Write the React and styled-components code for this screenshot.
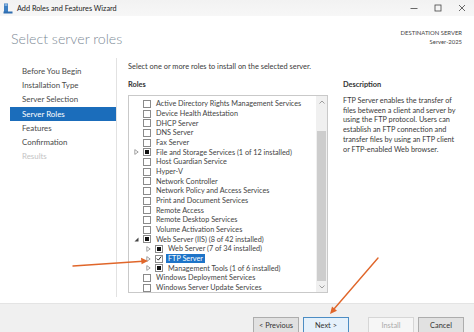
import React from 'react'
import styled, { createGlobalStyle, css } from 'styled-components'

const GlobalStyle = createGlobalStyle`
  html, body {
    margin: 0;
    padding: 0;
    background: #ffffff;
  }
  * { box-sizing: border-box; }
`

const Window = styled.div`
  position: relative;
  width: 474px;
  height: 332px;
  overflow: hidden;
  background: #ffffff;
  font-family: Lato, "Noto Sans", sans-serif;
  color: #333;
  display: flex;
  flex-direction: column;
`

const TitleBar = styled.div`
  height: 16px;
  flex: none;
  display: flex;
  align-items: center;
  padding-left: 3px;
  background: linear-gradient(#f2f2f2, #f7f7f7);
  font-size: 7.3px;
  color: #222;
`

const TitleText = styled.span`
  margin-left: 4px;
  flex: 1;
`

const Controls = styled.div`
  display: flex;
  align-items: center;
  height: 100%;
`

const CtrlBtn = styled.div`
  width: 24px;
  height: 100%;
  display: flex;
  align-items: center;
  justify-content: center;
`

const Header = styled.div`
  height: 42px;
  flex: none;
  display: flex;
  justify-content: space-between;
  padding: 8px 12px 0 11px;
`

const Heading = styled.h1`
  margin: 0;
  font-weight: 300;
  font-size: 14.2px;
  color: #7d8a96;
  line-height: 30px;
`

const Dest = styled.div`
  text-align: right;
  font-size: 5.9px;
  line-height: 9px;
  color: #444;
  padding-top: 4px;
`

const Body = styled.div`
  flex: 1;
  display: flex;
  min-height: 0;
`

const Nav = styled.div`
  width: 117px;
  flex: none;
  padding-top: 6px;
  border-right: 1px solid #e2e2e2;
  margin-bottom: 6px;
`

const NavItem = styled.div`
  height: 14.2px;
  line-height: 14.2px;
  margin-left: 10px;
  padding-left: 12px;
  font-size: 7.9px;
  color: ${p => (p.$disabled ? '#c4c4c4' : '#4a4a4a')};
  ${p =>
    p.$active &&
    css`
      background: #1b6dbb;
      color: #ffffff;
    `}
`

const Content = styled.div`
  flex: 1;
  display: flex;
  flex-direction: column;
  padding: 3px 0 0 11px;
`

const Intro = styled.div`
  font-size: 7.4px;
  line-height: 12px;
  color: #3a3a3a;
`

const Columns = styled.div`
  display: flex;
  margin-top: 6px;
`

const RolesCol = styled.div`
  width: 200px;
  flex: none;
`

const Label = styled.div`
  font-size: 7.4px;
  font-weight: 700;
  color: #333;
  line-height: 12px;
`

const ListBox = styled.div`
  margin-top: 4px;
  height: 198px;
  border: 1px solid #c9c9c9;
  display: flex;
`

const Rows = styled.div`
  flex: 1;
  padding-top: 3px;
`

const Row = styled.div`
  height: 9.68px;
  display: flex;
  align-items: center;
  padding-left: ${p => 4 + p.$level * 12}px;
  font-size: 7.25px;
  color: #444;
  white-space: nowrap;
`

const Expander = styled.div`
  width: 10px;
  flex: none;
  display: flex;
  align-items: center;
  padding-left: 1px;
`

const Check = styled.div`
  width: 8px;
  height: 8px;
  flex: none;
  border: 1px solid #8a8a8a;
  background: #fff;
  display: flex;
  align-items: center;
  justify-content: center;
`

const Partial = styled.div`
  width: 4px;
  height: 4px;
  background: #111;
`

const RowText = styled.span`
  margin-left: 4px;
  padding: 0 1px;
  line-height: 9px;
  ${p =>
    p.$selected &&
    css`
      background: #1e74c8;
      color: #fff;
      margin-left: 3px;
      padding: 0 2px;
    `}
`

const ScrollBar = styled.div`
  width: 11px;
  flex: none;
  background: #f0f0f0;
  display: flex;
  flex-direction: column;
  align-items: stretch;
`

const ScrollArrow = styled.div`
  height: 11px;
  display: flex;
  align-items: center;
  justify-content: center;
`

const ScrollTrack = styled.div`
  flex: 1;
  display: flex;
  flex-direction: column;
  padding: 24px 1px 0 1px;
`

const Thumb = styled.div`
  height: 150px;
  background: #cdcdcd;
`

const DescCol = styled.div`
  flex: 1;
  padding-left: 15px;
  padding-right: 4px;
`

const DescText = styled.div`
  margin-top: 5px;
  font-size: 7.3px;
  line-height: 9.7px;
  color: #3a3a3a;
  white-space: nowrap;
`

const Footer = styled.div`
  height: 29px;
  flex: none;
  background: #f0f0f0;
  border-top: 1px solid #e4e4e4;
  display: flex;
  align-items: flex-start;
  padding: 13px 0 0 253px;
  gap: 4px;
`

const Button = styled.div`
  width: 46px;
  height: 20px;
  flex: none;
  display: flex;
  align-items: flex-start;
  justify-content: center;
  padding-top: 3px;
  font-size: 7.4px;
  border: 1px solid #adadad;
  background: #e1e1e1;
  color: #333;
  margin-left: ${p => p.$gap || 0}px;
  ${p =>
    p.$primary &&
    css`
      border-color: #4c8dc4;
      background: #e5f1fb;
    `}
  ${p =>
    p.$disabled &&
    css`
      border-color: #d6d6d6;
      background: #f6f6f6;
      color: #aaa;
    `}
`

const Overlay = styled.svg`
  position: absolute;
  left: 0;
  top: 0;
  pointer-events: none;
`

const roles = [
  { text: 'Active Directory Rights Management Services' },
  { text: 'Device Health Attestation' },
  { text: 'DHCP Server' },
  { text: 'DNS Server' },
  { text: 'Fax Server' },
  { text: 'File and Storage Services (1 of 12 installed)', exp: 'closed', state: 'partial' },
  { text: 'Host Guardian Service' },
  { text: 'Hyper-V' },
  { text: 'Network Controller' },
  { text: 'Network Policy and Access Services' },
  { text: 'Print and Document Services' },
  { text: 'Remote Access' },
  { text: 'Remote Desktop Services' },
  { text: 'Volume Activation Services' },
  { text: 'Web Server (IIS) (8 of 42 installed)', exp: 'open', state: 'partial' },
  { text: 'Web Server (7 of 34 installed)', exp: 'closed', state: 'partial', level: 1 },
  { text: 'FTP Server', exp: 'closed', state: 'checked', level: 1, selected: true },
  { text: 'Management Tools (1 of 6 installed)', exp: 'closed', state: 'partial', level: 1 },
  { text: 'Windows Deployment Services' },
  { text: 'Windows Server Update Services' },
]

const navItems = [
  'Before You Begin',
  'Installation Type',
  'Server Selection',
  'Server Roles',
  'Features',
  'Confirmation',
  'Results',
]

const descLines = [
  'FTP Server enables the transfer of',
  'files between a client and server by',
  'using the FTP protocol. Users can',
  'establish an FTP connection and',
  'transfer files by using an FTP client',
  'or FTP-enabled Web browser.',
]

function ServerIcon() {
  return (
    <svg width="10" height="11" viewBox="0 0 10 11">
      <rect x="1" y="0.5" width="4" height="9" fill="#3d7fc2" />
      <rect x="1.6" y="1.5" width="2.8" height="1" fill="#cfe3f7" />
      <rect x="0.5" y="8.5" width="9" height="2" fill="#2e6db0" />
    </svg>
  )
}

function Expand({ type }) {
  if (type === 'closed') {
    return (
      <svg width="5" height="6" viewBox="0 0 5 6">
        <path d="M0.8 0.6 L4.2 3 L0.8 5.4 Z" fill="none" stroke="#8a8a8a" strokeWidth="0.8" />
      </svg>
    )
  }
  if (type === 'open') {
    return (
      <svg width="5" height="5" viewBox="0 0 5 5">
        <path d="M4.5 0.5 L4.5 4.5 L0.5 4.5 Z" fill="#444" />
      </svg>
    )
  }
  return null
}

function CheckBox({ state }) {
  return (
    <Check>
      {state === 'partial' && <Partial />}
      {state === 'checked' && (
        <svg width="7" height="7" viewBox="0 0 7 7">
          <path d="M1 3.6 L2.8 5.4 L6 1.2" fill="none" stroke="#111" strokeWidth="1.1" />
        </svg>
      )}
    </Check>
  )
}

export default function App() {
  return (
    <Window>
      <GlobalStyle />
      <TitleBar>
        <ServerIcon />
        <TitleText>Add Roles and Features Wizard</TitleText>
        <Controls>
          <CtrlBtn>
            <svg width="8" height="8" viewBox="0 0 8 8">
              <path d="M0.5 4.5 H7.5" stroke="#444" strokeWidth="0.8" />
            </svg>
          </CtrlBtn>
          <CtrlBtn>
            <svg width="8" height="8" viewBox="0 0 8 8">
              <rect x="1" y="1" width="6" height="6" fill="none" stroke="#444" strokeWidth="0.8" />
            </svg>
          </CtrlBtn>
          <CtrlBtn>
            <svg width="8" height="8" viewBox="0 0 8 8">
              <path d="M1 1 L7 7 M7 1 L1 7" stroke="#444" strokeWidth="0.8" />
            </svg>
          </CtrlBtn>
        </Controls>
      </TitleBar>

      <Header>
        <Heading>Select server roles</Heading>
        <Dest>
          DESTINATION SERVER
          <br />
          Server-2025
        </Dest>
      </Header>

      <Body>
        <Nav>
          {navItems.map(item => (
            <NavItem
              key={item}
              $active={item === 'Server Roles'}
              $disabled={item === 'Results'}
            >
              {item}
            </NavItem>
          ))}
        </Nav>

        <Content>
          <Intro>Select one or more roles to install on the selected server.</Intro>
          <Columns>
            <RolesCol>
              <Label>Roles</Label>
              <ListBox>
                <Rows>
                  {roles.map(r => (
                    <Row key={r.text} $level={r.level || 0}>
                      <Expander>
                        <Expand type={r.exp} />
                      </Expander>
                      <CheckBox state={r.state} />
                      <RowText $selected={r.selected}>{r.text}</RowText>
                    </Row>
                  ))}
                </Rows>
                <ScrollBar>
                  <ScrollArrow>
                    <svg width="6" height="4" viewBox="0 0 6 4">
                      <path d="M0.5 3.5 L3 1 L5.5 3.5" fill="none" stroke="#888" strokeWidth="0.8" />
                    </svg>
                  </ScrollArrow>
                  <ScrollTrack>
                    <Thumb />
                  </ScrollTrack>
                  <ScrollArrow>
                    <svg width="6" height="4" viewBox="0 0 6 4">
                      <path d="M0.5 0.5 L3 3 L5.5 0.5" fill="none" stroke="#888" strokeWidth="0.8" />
                    </svg>
                  </ScrollArrow>
                </ScrollBar>
              </ListBox>
            </RolesCol>
            <DescCol>
              <Label>Description</Label>
              <DescText>
                {descLines.map(l => (
                  <div key={l}>{l}</div>
                ))}
              </DescText>
            </DescCol>
          </Columns>
        </Content>
      </Body>

      <Footer>
        <Button>&lt; Previous</Button>
        <Button $primary>Next &gt;</Button>
        <Button $disabled $gap={15}>Install</Button>
        <Button>Cancel</Button>
      </Footer>

      <Overlay width="474" height="332" viewBox="0 0 474 332">
        <g stroke="#e0662a" strokeWidth="1.4" fill="#e0662a" strokeLinecap="round">
          <line x1="73" y1="266" x2="143" y2="261.2" />
          <path d="M148 261 L141 257.8 L141.6 264.2 Z" stroke="none" />
          <line x1="378" y1="258" x2="334" y2="309" />
          <path d="M330 314 L332 306.5 L337 310.8 Z" stroke="none" />
        </g>
      </Overlay>
    </Window>
  )
}
